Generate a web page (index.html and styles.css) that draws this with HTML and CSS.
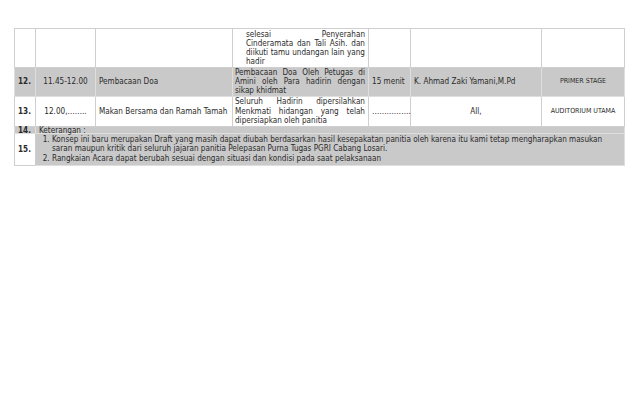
FILE: index.html
```html
<!DOCTYPE html>
<html>
<head>
<meta charset="utf-8">
<link rel="stylesheet" href="styles.css">
</head>
<body>
<table class="sheet">
  <colgroup>
    <col class="c-no"><col class="c-time"><col class="c-act"><col class="c-desc"><col class="c-dur"><col class="c-pic"><col class="c-place">
  </colgroup>
  <tr class="r-top">
    <td></td><td></td><td></td>
    <td class="desc indent">
      <span class="jl">selesai Penyerahan</span>
      <span class="jl">Cinderamata dan Tali Asih. dan</span>
      <span class="jl">diikuti tamu undangan lain yang</span>
      <span class="ll">hadir</span>
    </td>
    <td></td><td></td><td></td>
  </tr>
  <tr class="r-12 gray">
    <td class="no">12.</td>
    <td class="center">11.45-12.00</td>
    <td class="left">Pembacaan Doa</td>
    <td class="desc">
      <span class="jl">Pembacaan Doa Oleh Petugas di</span>
      <span class="jl">Amini oleh Para hadirin dengan</span>
      <span class="ll">sikap khidmat</span>
    </td>
    <td class="left">15 menit</td>
    <td class="left">K. Ahmad Zaki Yamani,M.Pd</td>
    <td class="center small">PRIMER STAGE</td>
  </tr>
  <tr class="r-13">
    <td class="no">13.</td>
    <td class="center">12.00,……..</td>
    <td class="left">Makan Bersama dan Ramah Tamah</td>
    <td class="desc">
      <span class="jl">Seluruh Hadirin dipersilahkan</span>
      <span class="jl">Menkmati hidangan yang telah</span>
      <span class="ll">dipersiapkan oleh panitia</span>
    </td>
    <td class="left">…………….</td>
    <td class="center">All,</td>
    <td class="center small">AUDITORIUM UTAMA</td>
  </tr>
  <tr class="r-14 gray">
    <td class="no"><div class="thin">14.</div></td>
    <td colspan="6" class="left"><div class="thin">Keterangan :</div></td>
  </tr>
  <tr class="r-15">
    <td class="no">15.</td>
    <td colspan="6" class="notes gray">
      <ol class="list">
        <li>Konsep ini baru merupakan Draft yang masih dapat diubah berdasarkan hasil kesepakatan panitia oleh karena itu kami tetap mengharapkan masukan<br>saran maupun kritik dari seluruh jajaran panitia Pelepasan Purna Tugas PGRI Cabang Losari.</li>
        <li>Rangkaian Acara dapat berubah sesuai dengan situasi dan kondisi pada saat pelaksanaan</li>
      </ol>
    </td>
  </tr>
</table>
</body>
</html>
```
FILE: styles.css
```css
html, body {
  margin: 0;
  padding: 0;
  background: #ffffff;
}
body {
  font-family: "DejaVu Sans Condensed", "DejaVu Sans", Verdana, sans-serif;
  font-size: 8.1px;
  line-height: 9.2px;
  color: #2a2a2a;
}
.sheet {
  margin: 28px 0 0 14px;
  border-collapse: collapse;
  table-layout: fixed;
  width: 611px;
}
.c-no { width: 21px; }
.c-time { width: 60px; }
.c-act { width: 137px; }
.c-desc { width: 136px; }
.c-dur { width: 42px; }
.c-pic { width: 131px; }
.c-place { width: 83px; }
.sheet td {
  border: 1px solid #cfcfcf;
  padding: 0 3px;
  vertical-align: middle;
  white-space: nowrap;
  overflow: visible;
}
.gray, .gray td {
  background: #c9c9c9;
}
.sheet .gray td, .sheet td.gray {
  border-color: #dedede;
}
.r-top { height: 39px; }
.r-12 { height: 28px; }
.r-13 { height: 30px; }
.r-14 { height: 7px; }
.r-15 { height: 32px; }
.sheet td.no {
  font-weight: bold;
  padding-left: 3px;
}
.sheet td.center { text-align: center; }
.sheet td.left { text-align: left; }
.sheet td.small { font-size: 7px; }
.sheet td.desc {
  padding: 0 3px 0 2px;
}
.sheet td.indent {
  padding-left: 13px;
}
.jl {
  display: block;
  text-align: justify;
  text-align-last: justify;
}
.ll {
  display: block;
  text-align: left;
}
.thin {
  height: 6px;
  line-height: 6px;
}
.sheet td.notes {
  padding: 0 3px;
  line-height: 9.5px;
}
.list {
  margin: 0;
  padding-left: 13px;
}
```
